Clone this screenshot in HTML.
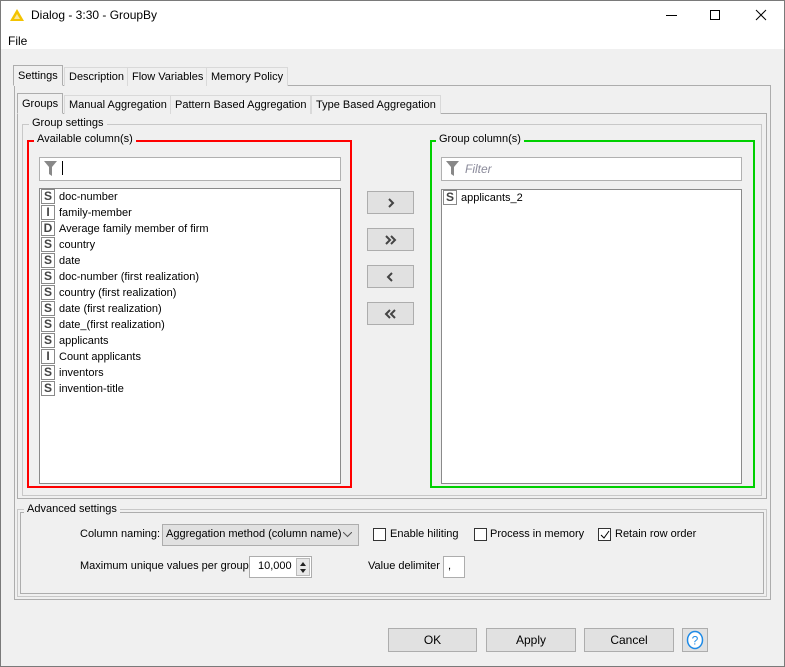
<!DOCTYPE html>
<html><head><style>
*{box-sizing:border-box;margin:0;padding:0}
body{width:785px;height:667px;position:relative;overflow:hidden;background:#f0f0f0;font-family:"Liberation Sans",sans-serif;font-size:11px;color:#000}
.a{position:absolute}
.t{position:absolute;white-space:nowrap}
.tab{position:absolute;border:1px solid #d9d9d9;border-bottom:none;background:#f0f0f0;padding:3px 4px 0;height:19px}
.sel{background:#f0f0f0;border-color:#adadad}
.box{position:absolute;background:#fff;border:1px solid #a0a0a0}
.btn{position:absolute;background:#e1e1e1;border:1px solid #adadad;text-align:center;font-size:12px}
.row{position:absolute;left:1px;height:16px;line-height:16px;font-size:11px}
.ic{display:inline-block;width:14px;height:15px;border:1px solid #8a8a8a;text-align:center;font-weight:bold;font-size:12px;line-height:13px;margin-right:4px;vertical-align:top;color:#444;background:#fff}
.cb{position:absolute;width:13px;height:13px;border:1px solid #333;background:#fff}
</style></head><body>
<div class="a" style="left:0;top:0;width:785px;height:49px;background:#fff"></div>
<div class="a" style="left:0;top:0;width:785px;height:667px;border:1px solid #7a7a7a;z-index:5"></div>
<svg class="a" style="left:9px;top:8px" width="16" height="14"><polygon points="8,1 15,13 1,13" fill="#f3c300"/><polygon points="8,6 11,11 5,11" fill="#fff" opacity=".6"/></svg>
<div class="t" style="left:31px;top:8px;font-size:12px">Dialog - 3:30 - GroupBy</div>
<div class="a" style="left:666px;top:15px;width:11px;height:1px;background:#000"></div>
<div class="a" style="left:710px;top:10px;width:10px;height:10px;border:1px solid #000"></div>
<svg class="a" style="left:755px;top:9px" width="12" height="12"><path d="M1 1L11 11M11 1L1 11" stroke="#000" stroke-width="1"/></svg>
<div class="t" style="left:8px;top:34px;font-size:12px">File</div>

<div class="a" style="left:14px;top:85px;width:757px;height:515px;border:1px solid #adadad;background:#f0f0f0"></div>
<div class="tab sel" style="left:13px;top:65px;height:21px;padding-top:4px;border-color:#adadad;border-bottom:1px solid #f0f0f0">Settings</div>
<div class="tab" style="left:64px;top:67px">Description</div>
<div class="tab" style="left:127px;top:67px">Flow Variables</div>
<div class="tab" style="left:206px;top:67px">Memory Policy</div>

<div class="a" style="left:17px;top:113px;width:750px;height:386px;border:1px solid #adadad"></div>
<div class="tab sel" style="left:17px;top:93px;height:21px;padding-top:4px;border-color:#adadad;border-bottom:1px solid #f0f0f0">Groups</div>
<div class="tab" style="left:64px;top:95px">Manual Aggregation</div>
<div class="tab" style="left:170px;top:95px">Pattern Based Aggregation</div>
<div class="tab" style="left:311px;top:95px">Type Based Aggregation</div>

<div class="a" style="left:22px;top:124px;width:740px;height:372px;border:1px solid #c8c8c8"></div>
<div class="t" style="left:29px;top:117px;background:#f0f0f0;padding:0 3px">Group settings</div>

<div class="a" style="left:27px;top:140px;width:325px;height:348px;border:2px solid #f00"></div>
<div class="t" style="left:34px;top:133px;background:#f0f0f0;padding:0 3px">Available column(s)</div>
<div class="box" style="left:39px;top:157px;width:302px;height:24px;border-color:#b0b0b0"></div>
<svg class="a" style="left:44px;top:161px" width="14" height="15"><path d="M0 0H13L8 6V15L5 13V6Z" fill="#888"/></svg>
<div class="a" style="left:62px;top:161px;width:1px;height:14px;background:#000"></div>
<div class="box" style="left:39px;top:188px;width:302px;height:296px;border-color:#8a8a8a">
<div class="row" style="top:0"><span class="ic">S</span>doc-number</div>
<div class="row" style="top:16px"><span class="ic">I</span>family-member</div>
<div class="row" style="top:32px"><span class="ic">D</span>Average family member of firm</div>
<div class="row" style="top:48px"><span class="ic">S</span>country</div>
<div class="row" style="top:64px"><span class="ic">S</span>date</div>
<div class="row" style="top:80px"><span class="ic">S</span>doc-number (first realization)</div>
<div class="row" style="top:96px"><span class="ic">S</span>country (first realization)</div>
<div class="row" style="top:112px"><span class="ic">S</span>date (first realization)</div>
<div class="row" style="top:128px"><span class="ic">S</span>date_(first realization)</div>
<div class="row" style="top:144px"><span class="ic">S</span>applicants</div>
<div class="row" style="top:160px"><span class="ic">I</span>Count applicants</div>
<div class="row" style="top:176px"><span class="ic">S</span>inventors</div>
<div class="row" style="top:192px"><span class="ic">S</span>invention-title</div>
</div>

<div class="btn" style="left:367px;top:191px;width:47px;height:23px"><svg width="45" height="21"><path d="M21 7L25 11L21 15" stroke="#444" stroke-width="2" fill="none"/></svg></div>
<div class="btn" style="left:367px;top:228px;width:47px;height:23px"><svg width="45" height="21"><path d="M18 7L22 11L18 15M23 7L27 11L23 15" stroke="#444" stroke-width="2" fill="none"/></svg></div>
<div class="btn" style="left:367px;top:265px;width:47px;height:23px"><svg width="45" height="21"><path d="M24 7L20 11L24 15" stroke="#444" stroke-width="2" fill="none"/></svg></div>
<div class="btn" style="left:367px;top:302px;width:47px;height:23px"><svg width="45" height="21"><path d="M22 7L18 11L22 15M27 7L23 11L27 15" stroke="#444" stroke-width="2" fill="none"/></svg></div>

<div class="a" style="left:430px;top:140px;width:325px;height:348px;border:2px solid #00d000"></div>
<div class="t" style="left:436px;top:133px;background:#f0f0f0;padding:0 3px">Group column(s)</div>
<div class="box" style="left:441px;top:157px;width:301px;height:24px;border-color:#b0b0b0"></div>
<svg class="a" style="left:446px;top:161px" width="14" height="15"><path d="M0 0H13L8 6V15L5 13V6Z" fill="#888"/></svg>
<div class="t" style="left:465px;top:162px;font-size:12px;font-style:italic;color:#8a8a9a">Filter</div>
<div class="box" style="left:441px;top:189px;width:301px;height:295px;border-color:#8a8a8a">
<div class="row" style="top:0"><span class="ic">S</span>applicants_2</div>
</div>

<div class="a" style="left:17px;top:509px;width:750px;height:88px;border:1px solid #c8c8c8"></div>
<div class="a" style="left:20px;top:512px;width:744px;height:82px;border:1px solid #adadad"></div>
<div class="t" style="left:24px;top:503px;background:#f0f0f0;padding:0 3px">Advanced settings</div>
<div class="t" style="left:80px;top:528px">Column naming:</div>
<div class="a" style="left:162px;top:524px;width:197px;height:22px;border:1px solid #adadad;background:#e1e1e1"></div>
<div class="t" style="left:166px;top:528px">Aggregation method (column name)</div>
<svg class="a" style="left:343px;top:532px" width="9" height="6"><path d="M0 0L4.5 4.5L9 0" stroke="#555" fill="none"/></svg>
<div class="cb" style="left:373px;top:528px"></div><div class="t" style="left:390px;top:528px">Enable hiliting</div>
<div class="cb" style="left:474px;top:528px"></div><div class="t" style="left:490px;top:528px">Process in memory</div>
<div class="cb" style="left:598px;top:528px"></div>
<svg class="a" style="left:600px;top:530px" width="10" height="10"><path d="M1 5L4 8L9 1" stroke="#000" fill="none"/></svg>
<div class="t" style="left:615px;top:528px">Retain row order</div>
<div class="t" style="left:80px;top:560px">Maximum unique values per group</div>
<div class="box" style="left:249px;top:556px;width:63px;height:22px;border-color:#adadad"></div>
<div class="t" style="left:258px;top:560px">10,000</div>
<div class="a" style="left:296px;top:558px;width:14px;height:18px;background:#e8e8e8;border:1px solid #bbb"></div>
<svg class="a" style="left:299px;top:561px" width="8" height="13"><path d="M4 1L7 5H1Z M1 8H7L4 12Z" fill="#222"/></svg>
<div class="t" style="left:368px;top:560px">Value delimiter</div>
<div class="box" style="left:443px;top:556px;width:22px;height:22px;border-color:#adadad"></div>
<div class="t" style="left:448px;top:560px">,</div>

<div class="btn" style="left:388px;top:628px;width:89px;height:24px;line-height:22px">OK</div>
<div class="btn" style="left:486px;top:628px;width:90px;height:24px;line-height:22px">Apply</div>
<div class="btn" style="left:584px;top:628px;width:90px;height:24px;line-height:22px">Cancel</div>
<div class="btn" style="left:682px;top:628px;width:26px;height:24px"><svg width="24" height="22" style="display:block"><ellipse cx="12" cy="11" rx="7.5" ry="8.5" fill="#fff" stroke="#1e8ae6" stroke-width="1.5"/><text x="12" y="15.5" text-anchor="middle" font-family="Liberation Sans" font-size="12" fill="#1e8ae6">?</text></svg></div>
</body></html>
